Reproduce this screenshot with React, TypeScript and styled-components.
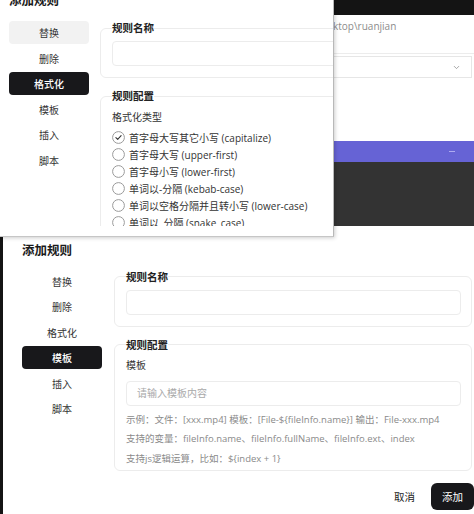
import React from 'react';
import styled, { createGlobalStyle } from 'styled-components';
import { ChevronDown } from 'lucide-react';

const GlobalStyle = createGlobalStyle`
  *, *::before, *::after {
    box-sizing: border-box;
  }

  html, body {
    margin: 0;
    padding: 0;
    background: #fff;
  }

  body {
    font-family: "Open Sans", "Noto Sans CJK SC", sans-serif;
    color: #1f1f1f;
  }
`;

const Page = styled.div`
  width: 474px;
  height: 514px;
  overflow: hidden;
  display: flex;
  flex-direction: column;
  background: #fff;
`;

const TopShot = styled.div`
  display: flex;
  height: 237px;
  flex-shrink: 0;
`;

const Window = styled.div`
  position: relative;
  z-index: 1;
  width: 334px;
  height: 237px;
  flex-shrink: 0;
  display: flex;
  flex-direction: column;
  overflow: hidden;
  padding-bottom: 10px;
  background: #fff;
  border-right: 1px solid #b8b8b8;
  border-bottom: 1px solid #c6c6c6;
  box-shadow: 1px 1px 4px rgba(0, 0, 0, 0.2);
`;

const WindowScroll = styled.div`
  flex: 1;
  overflow: hidden;
  padding-left: 9px;
`;

const WindowContent = styled.div`
  width: 470px;
  margin-top: -8px;
`;

const BackApp = styled.div`
  flex: 1;
  display: flex;
  flex-direction: column;
  background: #fff;
  min-width: 0;
`;

const BackTitleBar = styled.div`
  height: 15px;
  background: #141414;
`;

const PathRow = styled.div`
  height: 39px;
  border-bottom: 1px solid #ececec;
  font-size: 10px;
  line-height: 22px;
  color: #8c8c8c;
  white-space: nowrap;
  margin-left: -1px;
`;

const BackSelect = styled.div`
  height: 22px;
  margin: 2px 2px 0 0;
  border: 1px solid #e6e6e6;
  border-left: none;
  display: flex;
  align-items: center;
  justify-content: flex-end;
  padding-right: 10px;
  color: #8a8a8a;
`;

const BackSpacer = styled.div`
  flex: 1;
`;

const PurpleBar = styled.div`
  height: 21px;
  background: #6663d5;
  display: flex;
  align-items: center;
  justify-content: flex-end;
  padding-right: 19px;
`;

const Dash = styled.span`
  width: 6px;
  height: 1.5px;
  background: #aeabf0;
`;

const DarkPanel = styled.div`
  height: 64px;
  background: #333;
`;

const BackFooter = styled.div`
  height: 11px;
`;

const BottomShot = styled.div`
  flex: 1;
  display: flex;
  min-height: 0;
`;

const EdgeStrip = styled.div`
  width: 3px;
  background: #141414;
`;

const Dialog = styled.div`
  flex: 1;
  display: flex;
  flex-direction: column;
  padding: 5px 0 0 19px;
  min-width: 0;
`;

const Header = styled.div`
  display: flex;
  justify-content: space-between;
  align-items: flex-start;
`;

const Title = styled.div`
  font-size: 12.5px;
  font-weight: 700;
  line-height: 18px;
  color: #1a1a1a;
`;

const Close = styled.span`
  font-size: 13px;
  line-height: 10px;
  color: #9a9a9a;
  margin: -2px -8px 0 0;
`;

const Body = styled.div<{ $gap: number; $top: number }>`
  display: flex;
  align-items: flex-start;
  gap: ${({ $gap }) => $gap}px;
  margin-top: ${({ $top }) => $top}px;
`;

const Nav = styled.div`
  width: 80px;
  flex-shrink: 0;
  display: flex;
  flex-direction: column;
  gap: 2.6px;
`;

const NavItem = styled.div<{ $active?: boolean; $hover?: boolean }>`
  height: 23px;
  display: flex;
  align-items: center;
  justify-content: center;
  border-radius: 4px;
  font-size: 10px;
  font-weight: ${({ $active }) => ($active ? 500 : 400)};
  color: ${({ $active }) => ($active ? '#fff' : '#333')};
  background: ${({ $active, $hover }) =>
    $active ? '#18181b' : $hover ? '#f2f2f2' : 'transparent'};
`;

const Main = styled.div`
  flex: 1;
  min-width: 0;
  display: flex;
  flex-direction: column;
  gap: 11px;
  margin-right: 2px;
`;

const Card = styled.fieldset<{ $tight?: boolean }>`
  margin: 0;
  min-width: 0;
  border: 1px solid #ececec;
  border-radius: 6px;
  padding: 0 10px ${({ $tight }) => ($tight ? 2 : 11)}px 11px;
`;

const Legend = styled.legend`
  padding: 0;
  font-size: 10.5px;
  font-weight: 700;
  line-height: 14px;
  color: #222;
`;

const TextInput = styled.input<{ $top?: number }>`
  display: block;
  width: 100%;
  height: 25px;
  margin-top: ${({ $top }) => $top ?? 6}px;
  padding: 0 10px;
  border: 1px solid #ececec;
  border-radius: 4px;
  font-family: inherit;
  font-size: 10px;
  color: #333;
  outline: none;

  &::placeholder {
    color: #a9a9a9;
  }
`;

const FieldLabel = styled.div`
  margin-top: 5.5px;
  font-size: 10px;
  line-height: 17px;
  color: #333;
`;

const RadioList = styled.div`
  margin-top: 3px;
  display: flex;
  flex-direction: column;
`;

const RadioRow = styled.label`
  height: 17px;
  display: flex;
  align-items: center;
  gap: 4px;
  font-size: 10px;
  color: #333;
  white-space: nowrap;
`;

const Hints = styled.div`
  margin-top: 4px;
  font-size: 9.5px;
  line-height: 19.5px;
  color: #8a8a8a;
  white-space: nowrap;
`;

const Footer = styled.div`
  margin-top: 12px;
  display: flex;
  justify-content: flex-end;
  gap: 5px;
`;

const FooterButton = styled.button<{ $primary?: boolean }>`
  height: 27px;
  padding: 0 11px;
  border: none;
  border-radius: 6px;
  font-family: inherit;
  font-size: 10.5px;
  color: ${({ $primary }) => ($primary ? '#fff' : '#222')};
  background: ${({ $primary }) => ($primary ? '#18181b' : 'transparent')};
`;

const RadioIcon: React.FC<{ checked?: boolean }> = ({ checked }) => (
  <svg width="13" height="13" viewBox="0 0 13 13">
    <circle cx="6.5" cy="6.5" r="5.9" fill="#fff" stroke="#9a9a9a" strokeWidth="1" />
    {checked && (
      <path
        d="M3.9 6.7 L5.7 8.4 L9.1 4.7"
        fill="none"
        stroke="#333"
        strokeWidth="1.1"
        strokeLinecap="round"
        strokeLinejoin="round"
      />
    )}
  </svg>
);

const navItems = ['替换', '删除', '格式化', '模板', '插入', '脚本'];

const formatTypes = [
  '首字母大写其它小写 (capitalize)',
  '首字母大写 (upper-first)',
  '首字母小写 (lower-first)',
  '单词以-分隔 (kebab-case)',
  '单词以空格分隔并且转小写 (lower-case)',
  '单词以_分隔 (snake_case)',
];

const SideNav: React.FC<{ active: string; hover?: string }> = ({ active, hover }) => (
  <Nav>
    {navItems.map((item) => (
      <NavItem key={item} $active={item === active} $hover={item === hover}>
        {item}
      </NavItem>
    ))}
  </Nav>
);

export default function App() {
  return (
    <>
      <GlobalStyle />
      <Page>
        <TopShot>
          <Window>
            <WindowScroll>
              <WindowContent>
                <Title>添加规则</Title>
                <Body $gap={11} $top={11}>
                  <SideNav active="格式化" hover="替换" />
                  <Main>
                    <Card>
                      <Legend>规则名称</Legend>
                      <TextInput />
                    </Card>
                    <Card>
                      <Legend>规则配置</Legend>
                      <FieldLabel>格式化类型</FieldLabel>
                      <RadioList>
                        {formatTypes.map((type, i) => (
                          <RadioRow key={type}>
                            <RadioIcon checked={i === 0} />
                            {type}
                          </RadioRow>
                        ))}
                      </RadioList>
                    </Card>
                  </Main>
                </Body>
              </WindowContent>
            </WindowScroll>
          </Window>
          <BackApp>
            <BackTitleBar />
            <PathRow>ktop\ruanjian</PathRow>
            <BackSelect>
              <ChevronDown size={9} strokeWidth={2} />
            </BackSelect>
            <BackSpacer />
            <PurpleBar>
              <Dash />
            </PurpleBar>
            <DarkPanel />
            <BackFooter />
          </BackApp>
        </TopShot>

        <BottomShot>
          <EdgeStrip />
          <Dialog>
            <Header>
              <Title>添加规则</Title>
              <Close>×</Close>
            </Header>
            <Body $gap={12} $top={9.5}>
              <SideNav active="模板" />
              <Main>
                <Card>
                  <Legend>规则名称</Legend>
                  <TextInput />
                </Card>
                <Card $tight>
                  <Legend>规则配置</Legend>
                  <FieldLabel>模板</FieldLabel>
                  <TextInput $top={6.5} placeholder="请输入模板内容" />
                  <Hints>
                    <div>示例：文件：[xxx.mp4] 模板：[File-{'${fileInfo.name}'}] 输出：File-xxx.mp4</div>
                    <div>支持的变量：fileInfo.name、fileInfo.fullName、fileInfo.ext、index</div>
                    <div>支持js逻辑运算，比如：{'${index + 1}'}</div>
                  </Hints>
                </Card>
              </Main>
            </Body>
            <Footer>
              <FooterButton>取消</FooterButton>
              <FooterButton $primary>添加</FooterButton>
            </Footer>
          </Dialog>
        </BottomShot>
      </Page>
    </>
  );
}
